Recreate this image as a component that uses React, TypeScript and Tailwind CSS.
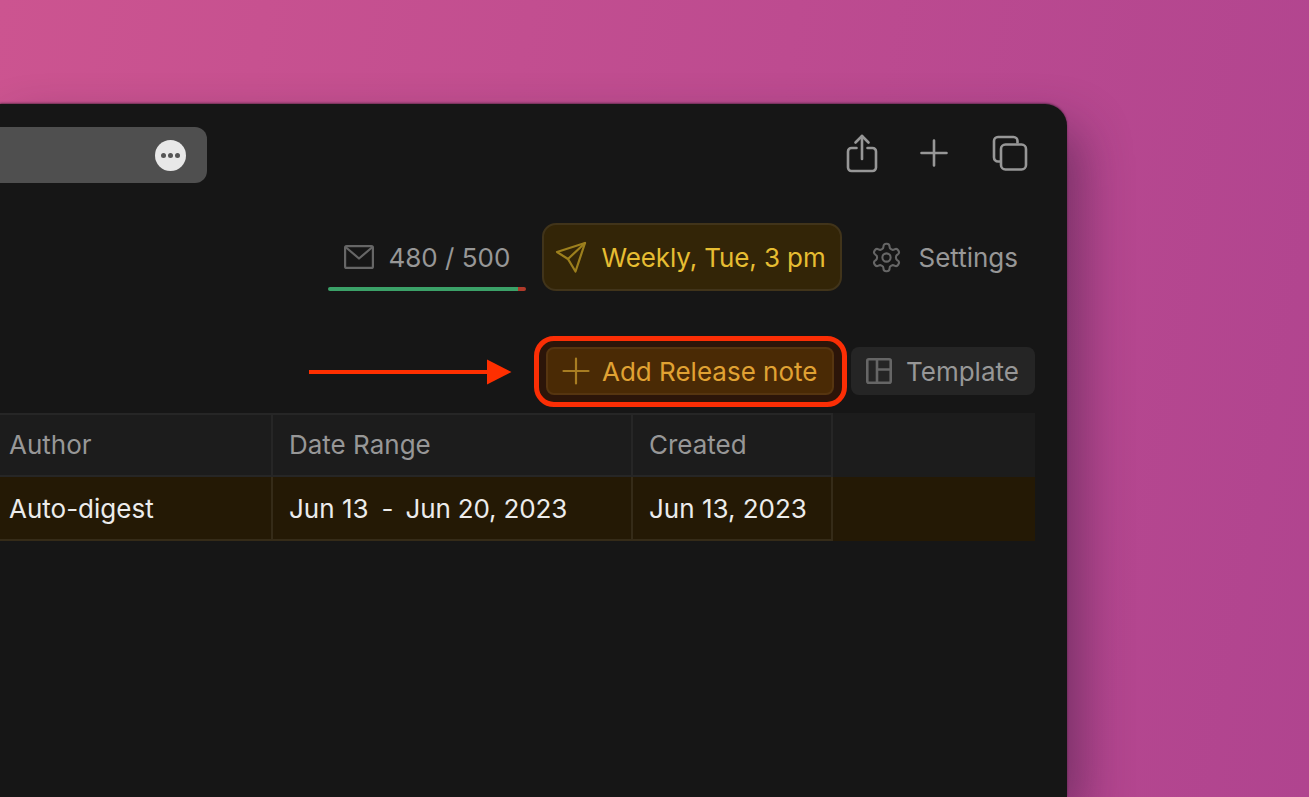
import React from "react";

function ShareIcon() {
  return (
    <svg width="32" height="40" viewBox="0 0 32 40" fill="none" stroke="#979797" strokeWidth="2.6" strokeLinecap="round" strokeLinejoin="round">
      <path d="M16 26V3" />
      <path d="M9.5 9.5 16 3l6.5 6.5" />
      <path d="M10.5 15H5.5a3.5 3.5 0 0 0-3.5 3.5v16A3.5 3.5 0 0 0 5.5 38h21a3.5 3.5 0 0 0 3.5-3.5v-16a3.500 3.500 0 0 0-3.500-3.500h-5" />
    </svg>
  );
}
function PlusIcon({ color = "#979797", size = 28, w = 2.6 }: { color?: string; size?: number; w?: number }) {
  return (
    <svg width={size} height={size} viewBox="0 0 28 28" fill="none" stroke={color} strokeWidth={w} strokeLinecap="round">
      <path d="M14 1.500v25M1.500 14h25" />
    </svg>
  );
}
function CopyIcon() {
  return (
    <svg width="36" height="36" viewBox="0 0 36 36" fill="none" stroke="#979797" strokeWidth="2.6" strokeLinejoin="round">
      <path d="M8.500 26.500H6a4 4 0 0 1-4-4V6a4 4 0 0 1 4-4h15.500a4 4 0 0 1 4 4v2.500" />
      <rect x="9" y="9.500" width="25" height="25" rx="4.500" />
    </svg>
  );
}
function MailIcon() {
  return (
    <svg width="30" height="24" viewBox="0 0 30 24" fill="none" stroke="#666666" strokeWidth="2.200" strokeLinejoin="round">
      <rect x="1.100" y="1.100" width="27.800" height="21.800" rx="1.500" />
      <path d="M1.500 2 15 13.500 28.500 2" />
    </svg>
  );
}
function SendIcon() {
  return (
    <svg width="32" height="32" viewBox="0 0 32 32" fill="none" stroke="#9c7f1d" strokeWidth="2.200" strokeLinejoin="round" strokeLinecap="round">
      <path d="M30 2 2 11l11 7 7.500 12.500Z" />
      <path d="M13 18 30 2" />
    </svg>
  );
}
function GearIcon() {
  return (
    <svg width="33" height="33" viewBox="0 0 24 24" fill="none" stroke="#666666" strokeWidth="1.500" strokeLinecap="round" strokeLinejoin="round">
      <path d="M12.220 2h-.44a2 2 0 0 0-2 2v.18a2 2 0 0 1-1 1.730l-.43.250a2 2 0 0 1-2 0l-.15-.08a2 2 0 0 0-2.730.730l-.22.380a2 2 0 0 0 .730 2.730l.15.100a2 2 0 0 1 1 1.720v.510a2 2 0 0 1-1 1.740l-.15.090a2 2 0 0 0-.730 2.730l.22.380a2 2 0 0 0 2.730.730l.15-.08a2 2 0 0 1 2 0l.43.250a2 2 0 0 1 1 1.730V20a2 2 0 0 0 2 2h.44a2 2 0 0 0 2-2v-.18a2 2 0 0 1 1-1.730l.43-.250a2 2 0 0 1 2 0l.15.080a2 2 0 0 0 2.730-.730l.22-.390a2 2 0 0 0-.730-2.730l-.15-.080a2 2 0 0 1-1-1.740v-.500a2 2 0 0 1 1-1.740l.15-.090a2 2 0 0 0 .730-2.730l-.22-.380a2 2 0 0 0-2.730-.730l-.15.080a2 2 0 0 1-2 0l-.43-.250a2 2 0 0 1-1-1.730V4a2 2 0 0 0-2-2z" />
      <circle cx="12" cy="12" r="3" />
    </svg>
  );
}
function LayoutIcon() {
  return (
    <svg width="26" height="26" viewBox="0 0 26 26" fill="none" stroke="#666666" strokeWidth="2.600" strokeLinejoin="round">
      <rect x="1.300" y="1.300" width="23.400" height="23.400" rx="1.500" />
      <path d="M11 1.300v23.400M11 11.500h13.700" />
    </svg>
  );
}

export default function App() {
  return (
    <div className="relative h-[797px] w-[1309px] overflow-hidden bg-[linear-gradient(100deg,#cc5490_0%,#bd4b90_55%,#b0448f_100%)] pt-[104px] font-['Inter',sans-serif]">
      <div className="flex h-[693px] w-[1067px] flex-col rounded-tr-[22px] bg-[#161616] pr-[32px] shadow-[0_-1px_2px_rgba(30,20,30,0.5),14px_24px_50px_rgba(40,20,50,0.45)]">
        <div className="mt-[23px] flex h-[56px] items-center justify-between pr-[7px]">
          <div className="flex h-[56px] w-[207px] items-center justify-end rounded-r-[12px] bg-[#4f4f4f] pr-[21px]">
            <div className="flex h-[31px] w-[31px] items-center justify-center gap-[2px] rounded-full bg-[#e8e8e8]">
              <span className="h-[5px] w-[5px] rounded-full bg-[#555555]" />
              <span className="h-[5px] w-[5px] rounded-full bg-[#555555]" />
              <span className="h-[5px] w-[5px] rounded-full bg-[#555555]" />
            </div>
          </div>
          <div className="flex -translate-y-[2px] items-center">
            <ShareIcon />
            <div className="ml-[42px]"><PlusIcon /></div>
            <div className="ml-[44px]"><CopyIcon /></div>
          </div>
        </div>

        <div className="mt-[40px] flex h-[68px] items-center justify-end pr-[17px] text-[26px] leading-none">
          <div className="relative flex h-[68px] w-[198px] items-center gap-[14px] pl-[16px] text-[#979797]">
            <MailIcon />
            <span className="pt-[2px]">480 / 500</span>
            <div className="absolute bottom-0 left-0 flex h-[4px] w-full overflow-hidden rounded-full">
              <div className="h-full w-[190px] bg-[#3ba168]" />
              <div className="h-full flex-1 bg-[#b03a2a]" />
            </div>
          </div>
          <div className="ml-[16px] flex h-[68px] w-[300px] items-center gap-[14px] rounded-[14px] border-2 border-[#41341a] bg-[#332507] pl-[11px] text-[#e6bd32]">
            <SendIcon />
            <span className="pt-[2px] tracking-[-0.1px]">Weekly, Tue, 3 pm</span>
          </div>
          <div className="ml-[28px] flex items-center gap-[15px] text-[#979797]">
            <GearIcon />
            <span className="pt-[2px]">Settings</span>
          </div>
        </div>

        <div className="relative mt-[45px] flex h-[71px] items-start justify-end">
          <svg className="absolute left-[309px] top-[23px]" width="203" height="26" viewBox="0 0 203 26" fill="#ff2f00">
            <rect x="0" y="11" width="180" height="4" />
            <path d="M178 0.500 202.500 13 178 25.500Z" />
          </svg>
          <div className="flex h-[71px] w-[313px] items-start rounded-[20px] border-[5px] border-[#fb2e05] bg-[#2c1509] pl-[7px] pt-[6px]">
            <div className="flex h-[48px] w-[288px] items-center gap-[12px] rounded-[8px] border-2 border-[#563510] bg-[#4a2a05] pl-[14px] text-[26px] leading-none text-[#e0a233]">
              <PlusIcon color="#a87d22" size={28} w={2.200} />
              <span className="pt-[2px]">Add Release note</span>
            </div>
          </div>
          <div className="ml-[4px] mt-[11px] flex h-[48px] w-[184px] items-center gap-[14px] rounded-[8px] bg-[#252525] pl-[15px] text-[26px] leading-none text-[#979797]">
            <LayoutIcon />
            <span className="pt-[2px]">Template</span>
          </div>
        </div>

        <div className="mt-[6px] text-[26px] leading-none">
          <div className="flex h-[64px] bg-[#1c1c1c] text-[#979797]">
            <div className="flex w-[273px] items-center border-y-2 border-r-2 border-[#262626] pl-[9px]">Author</div>
            <div className="flex w-[360px] items-center border-y-2 border-r-2 border-[#262626] pl-[16px]">Date Range</div>
            <div className="flex w-[200px] items-center border-y-2 border-r-2 border-[#262626] pl-[16px]">Created</div>
            <div className="flex-1" />
          </div>
          <div className="flex h-[64px] bg-[#241905] text-[#ececec]">
            <div className="flex w-[273px] items-center border-r-2 border-b-2 border-[#352b18] pl-[9px] pt-[2px]">Auto-digest</div>
            <div className="flex w-[360px] items-center gap-[13px] border-r-2 border-b-2 border-[#352b18] pl-[16px] pt-[2px]">
              <span>Jun 13</span>
              <span>-</span>
              <span className="-ml-[1px] tracking-[-0.15px]">Jun 20, 2023</span>
            </div>
            <div className="flex w-[200px] items-center border-r-2 border-b-2 border-[#352b18] pl-[16px] pt-[2px]">Jun 13, 2023</div>
            <div className="flex-1" />
          </div>
        </div>
      </div>
    </div>
  );
}
